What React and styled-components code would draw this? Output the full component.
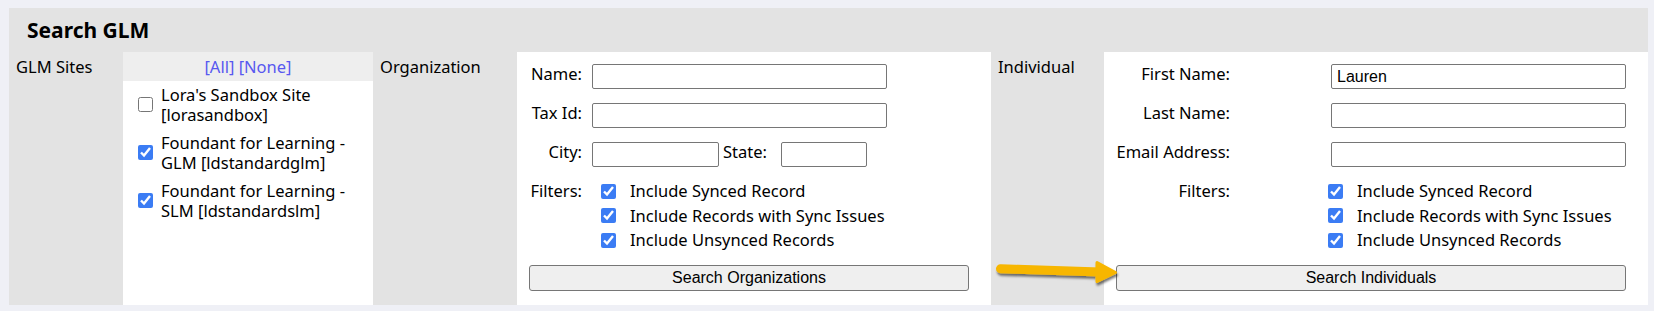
import React from 'react'
import styled, { createGlobalStyle } from 'styled-components'

const GlobalStyle = createGlobalStyle`
  html, body {
    margin: 0;
    background: #eff0f6;
    font-family: "Noto Sans", "Open Sans", sans-serif;
    color: #000;
  }
`

const UI = {
  Page: styled.div`
    padding: 8px 6px 6px 9px;
  `,
  Panel: styled.section`
    background: #e3e3e3;
    height: 297px;
    display: flex;
    flex-direction: column;
  `,
  Title: styled.h2`
    margin: 0;
    height: 44px;
    line-height: 45px;
    padding-left: 18px;
    font-size: 21px;
    font-weight: 700;
  `,
  Body: styled.div`
    position: relative;
    flex: 1;
    display: flex;
    align-items: stretch;
    font-size: 16.5px;
    line-height: 19.5px;
  `,
  SideLabel: styled.div`
    width: ${p => p.$width}px;
    flex: none;
    box-sizing: border-box;
    padding: 5px 0 0 7px;
  `,
  Sites: styled.div`
    width: 250px;
    flex: none;
    background: #fff;
  `,
  SitesHeader: styled.div`
    height: 29px;
    box-sizing: border-box;
    padding-top: 5px;
    background: #eeeeee;
    text-align: center;
  `,
  Link: styled.a`
    color: #5858f0;
    text-decoration: none;
    cursor: pointer;
  `,
  SiteList: styled.div`
    padding: 4px 10px 0 15px;
  `,
  Site: styled.label`
    display: flex;
    align-items: center;
    gap: 8px;
    margin-bottom: 9px;
  `,
  Check: styled.input.attrs({ type: 'checkbox' })`
    width: 15px;
    height: 15px;
    margin: 0;
    flex: none;
    accent-color: #3b7cf4;
  `,
  FormPanel: styled.div`
    ${p => (p.$width ? `width: ${p.$width}px; flex: none;` : 'flex: 1;')}
    box-sizing: border-box;
    background: #fff;
    padding: 12px 0 0 12px;
  `,
  Form: styled.div`
    display: grid;
    grid-template-columns: ${p => p.$cols};
    column-gap: ${p => p.$gap}px;
    row-gap: 14px;
    align-items: start;
  `,
  FieldLabel: styled.div`
    text-align: right;
    white-space: nowrap;
    ${p => p.$filter && 'line-height: 24.5px; margin-top: -2px;'}
  `,
  Input: styled.input`
    box-sizing: border-box;
    width: ${p => p.$width || 295}px;
    height: 25px;
    margin: 0;
    padding: 1px 5px;
    border: 1px solid #767676;
    border-radius: 2px;
    font-family: "Liberation Sans", Arial, sans-serif;
    font-size: 16px;
    color: #000;
    background: #fff;
  `,
  Inline: styled.div`
    display: flex;
    align-items: flex-start;
  `,
  InlineLabel: styled.span`
    padding: 0 14px 0 4px;
  `,
  Filters: styled.div`
    margin: -2px 0 0 ${p => p.$indent}px;
  `,
  Filter: styled.label`
    display: flex;
    align-items: center;
    gap: 14px;
    line-height: 24.5px;
    white-space: nowrap;
  `,
  Button: styled.button`
    grid-column: 1 / -1;
    margin-top: -2px;
    height: 26px;
    background: #efefef;
    border: 1px solid #767676;
    border-radius: 3px;
    font-family: "Liberation Sans", Arial, sans-serif;
    font-size: 16px;
    color: #000;
    padding: 0;
  `,
  Arrow: styled.svg`
    position: absolute;
    left: 981px;
    top: 203px;
    pointer-events: none;
  `,
}

const sites = [
  { name: "Lora's Sandbox Site [lorasandbox]", checked: false },
  { name: 'Foundant for Learning - GLM [ldstandardglm]', checked: true },
  { name: 'Foundant for Learning - SLM [ldstandardslm]', checked: true },
]

const filters = [
  'Include Synced Record',
  'Include Records with Sync Issues',
  'Include Unsynced Records',
]

const FilterList = ({ indent }) => (
  <UI.Filters $indent={indent}>
    {filters.map(f => (
      <UI.Filter key={f}>
        <UI.Check defaultChecked />
        {f}
      </UI.Filter>
    ))}
  </UI.Filters>
)

const Arrow = () => (
  <UI.Arrow width="140" height="36" viewBox="0 0 140 36">
    <defs>
      <filter id="arrowShadow" x="-10%" y="-40%" width="130%" height="200%">
        <feDropShadow dx="1" dy="2.5" stdDeviation="1.2" floodColor="#000" floodOpacity="0.55" />
      </filter>
    </defs>
    <g filter="url(#arrowShadow)" fill="#f7b600" stroke="#f7b600" strokeLinejoin="round">
      <line x1="10.5" y1="13.7" x2="110" y2="17" strokeWidth="9" strokeLinecap="round" />
      <polygon points="107,7.5 125.5,17.5 107,26.5" strokeWidth="3" />
    </g>
  </UI.Arrow>
)

export default function App () {
  return (
    <UI.Page>
      <GlobalStyle />
      <UI.Panel>
        <UI.Title>Search GLM</UI.Title>
        <UI.Body>
          <UI.SideLabel $width={114}>GLM Sites</UI.SideLabel>
          <UI.Sites>
            <UI.SitesHeader>
              <UI.Link>[All]</UI.Link> <UI.Link>[None]</UI.Link>
            </UI.SitesHeader>
            <UI.SiteList>
              {sites.map(s => (
                <UI.Site key={s.name}>
                  <UI.Check defaultChecked={s.checked} />
                  <span>{s.name}</span>
                </UI.Site>
              ))}
            </UI.SiteList>
          </UI.Sites>

          <UI.SideLabel $width={144}>Organization</UI.SideLabel>
          <UI.FormPanel $width={474}>
            <UI.Form $cols="53px 377px" $gap={10}>
              <UI.FieldLabel>Name:</UI.FieldLabel>
              <UI.Input />
              <UI.FieldLabel>Tax Id:</UI.FieldLabel>
              <UI.Input />
              <UI.FieldLabel>City:</UI.FieldLabel>
              <UI.Inline>
                <UI.Input $width={127} />
                <UI.InlineLabel>State:</UI.InlineLabel>
                <UI.Input $width={86} />
              </UI.Inline>
              <UI.FieldLabel $filter>Filters:</UI.FieldLabel>
              <FilterList indent={9} />
              <UI.Button>Search Organizations</UI.Button>
            </UI.Form>
          </UI.FormPanel>

          <UI.SideLabel $width={113}>Individual</UI.SideLabel>
          <UI.FormPanel>
            <UI.Form $cols="114px 295px" $gap={101}>
              <UI.FieldLabel>First Name:</UI.FieldLabel>
              <UI.Input defaultValue="Lauren" />
              <UI.FieldLabel>Last Name:</UI.FieldLabel>
              <UI.Input />
              <UI.FieldLabel>Email Address:</UI.FieldLabel>
              <UI.Input />
              <UI.FieldLabel $filter>Filters:</UI.FieldLabel>
              <FilterList indent={-3} />
              <UI.Button>Search Individuals</UI.Button>
            </UI.Form>
          </UI.FormPanel>

          <Arrow />
        </UI.Body>
      </UI.Panel>
    </UI.Page>
  )
}
